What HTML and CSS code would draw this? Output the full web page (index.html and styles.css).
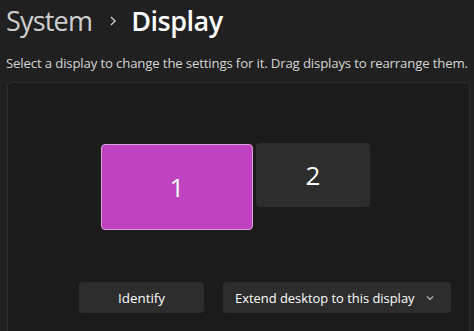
FILE: index.html
```html
<!DOCTYPE html>
<html lang="en">
<head>
    <meta charset="UTF-8">
    <title>System &gt; Display</title>
    <link rel="stylesheet" href="styles.css">
</head>
<body>

    <div class="header">
        <span class="crumb">System</span>
        <svg class="crumb-sep" width="12" height="12" viewBox="0 0 12 12">
            <path d="M4 2 L8 6 L4 10" fill="none" stroke="#cfcfcf" stroke-width="1.4"/>
        </svg>
        <span class="crumb current">Display</span>
    </div>

    <p class="hint">Select a display to change the settings for it. Drag displays to rearrange them.</p>

    <div class="panel">
        <div class="monitors">
            <div class="monitor main">1</div>
            <div class="monitor second">2</div>
        </div>

        <div class="actions">
            <button class="btn identify">Identify</button>
            <button class="btn select">
                Extend desktop to this display
                <svg width="10" height="10" viewBox="0 0 10 10">
                    <path d="M2 3.5 L5 6.5 L8 3.5" fill="none" stroke="#bdbdbd" stroke-width="1.1"/>
                </svg>
            </button>
        </div>
    </div>

</body>
</html>
```

FILE: styles.css
```css
/* Base styles */
body {
    font-family: 'Open Sans', 'Noto Sans', sans-serif;
    background: #202020;
    color: #fff;
    margin: 0;
    padding: 0 0 0 6px;
    height: 331px;
    overflow: hidden;
}

.header {
    display: flex;
    align-items: center;
    height: 40px;
}

.crumb {
    font-size: 27px;
    color: #cfcfcf;
    letter-spacing: -0.8px;
}

.crumb.current {
    color: #fff;
    font-weight: 600;
    letter-spacing: -0.5px;
}

.crumb-sep {
    margin: 2px 12px 0 15px;
}

.hint {
    margin: 14px 0 0 0;
    font-size: 13.2px;
    color: #d6d6d6;
    letter-spacing: -0.15px;
    height: 18px;
}

.panel {
    margin: 10px 0 0 1px;
    width: 463px;
    height: 260px;
    background: #1b1b1b;
    border: 1px solid #2e2e2e;
    border-radius: 5px;
    box-sizing: border-box;
}

.monitors {
    display: flex;
    align-items: flex-start;
    gap: 3px;
    padding: 60px 0 0 93px;
    height: 148px;
    box-sizing: border-box;
}

.monitor {
    display: flex;
    justify-content: center;
    align-items: center;
    border-radius: 4px;
    font-size: 26px;
    color: #fff;
    box-sizing: border-box;
}

.monitor.main {
    width: 152px;
    height: 86px;
    margin-top: 1px;
    background: #bf42c0;
    border: 1px solid #d9a0da;
}

.monitor.second {
    width: 114px;
    height: 64px;
    background: #2d2d2d;
}

.actions {
    display: flex;
    gap: 19px;
    padding: 51px 0 0 71px;
}

.btn {
    height: 31px;
    border: none;
    border-radius: 4px;
    background: #2d2d2d;
    color: #fff;
    font-family: inherit;
    font-size: 13.4px;
    cursor: pointer;
}

.identify {
    width: 125px;
}

.select {
    width: 228px;
    display: flex;
    align-items: center;
    justify-content: space-between;
    padding: 0 16px 0 12px;
    font-size: 12.9px;
}
```
